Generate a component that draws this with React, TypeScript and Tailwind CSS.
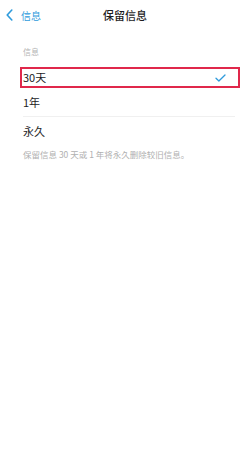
import { useState } from 'react';

const options = ['30天', '1年', '永久'];

export default function App() {
  const [selected, setSelected] = useState(0);

  return (
    <div
      className="h-[455px] w-[250px] bg-white text-[#1c1c1e]"
      style={{ fontFamily: '"Noto Sans CJK SC", "Noto Sans", sans-serif' }}
    >
      {/* Nav bar */}
      <div className="grid h-[30px] grid-cols-[1fr_auto_1fr] items-center">
        <button className="flex items-center gap-[8px] pl-[6px] text-[10px] text-[#2f9bdc]">
          <svg width="7" height="12" viewBox="0 0 7 12" fill="none">
            <path
              d="M5.8 1 L1.2 6 L5.8 11"
              stroke="#2f9bdc"
              strokeWidth="1.6"
              strokeLinecap="round"
              strokeLinejoin="round"
            />
          </svg>
          <span>信息</span>
        </button>
        <h1 className="text-[11px] font-medium">保留信息</h1>
        <div />
      </div>

      <div className="pl-[20px] pr-[10px]">
        <p className="mt-[16px] pl-[3px] text-[8px] leading-[12px] text-[#b4b4b4]">信息</p>

        <div className="mt-[9px] flex flex-col">
          {options.map((opt, i) => {
            const isSel = i === selected;
            return (
              <div key={opt} className="flex flex-col">
                <button
                  onClick={() => setSelected(i)}
                  className={`flex items-center justify-between text-left text-[11px] ${
                    isSel
                      ? 'h-[21px] border-2 border-[#e0284b] pl-[1px] pr-[12px]'
                      : 'h-[28px] pl-[3px] pr-[14px]'
                  }`}
                >
                  <span>{opt}</span>
                  {isSel && (
                    <svg width="11" height="8" viewBox="0 0 11 8" fill="none">
                      <path
                        d="M1 4.2 L3.9 7 L10 1"
                        stroke="#2f9bdc"
                        strokeWidth="1.3"
                        strokeLinecap="round"
                        strokeLinejoin="round"
                      />
                    </svg>
                  )}
                </button>
                {i === 1 && <div className="ml-[3px] mr-[5px] h-px bg-[#f0f0f0]" />}
              </div>
            );
          })}
        </div>

        <p className="mt-[3px] pl-[3px] text-[8.5px] leading-[12px] text-[#b0b0b0]">
          保留信息 30 天或 1 年将永久删除较旧信息。
        </p>
      </div>
    </div>
  );
}
